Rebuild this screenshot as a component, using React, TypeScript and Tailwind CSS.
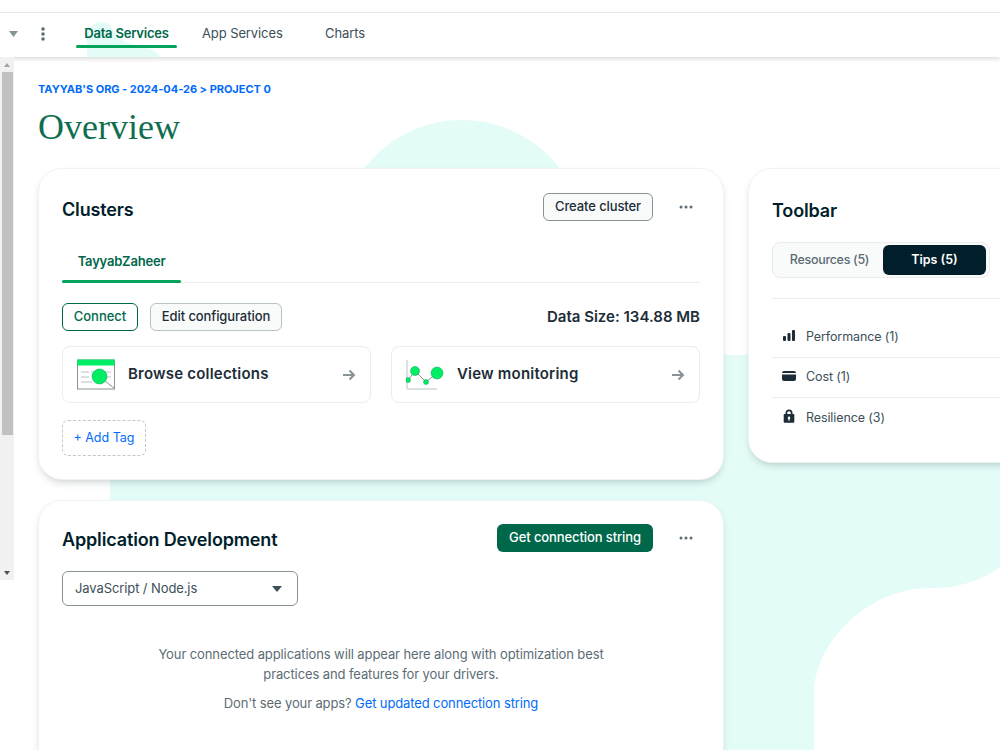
import React from "react";

function Dots() {
  return (
    <svg width="16" height="16" viewBox="0 0 16 16" fill="#5c6c75">
      <circle cx="3" cy="8" r="1.5" />
      <circle cx="8" cy="8" r="1.5" />
      <circle cx="13" cy="8" r="1.5" />
    </svg>
  );
}

function Arrow() {
  return (
    <svg width="14" height="14" viewBox="0 0 14 14" fill="none" stroke="#889397" strokeWidth="2">
      <path d="M1 7h11M7.500 2.500 12 7l-4.500 4.500" />
    </svg>
  );
}

function BrowseIcon() {
  return (
    <svg width="40" height="32" viewBox="0 0 40 32" fill="none">
      <rect x="0.500" y="1" width="37" height="29" fill="#fff" stroke="#889397" />
      <rect x="0.500" y="0.500" width="37" height="6" fill="#00ed64" />
      <path d="M4 13h8M14 13h20M4 18h8M26 18h8M4 23h11" stroke="#b8c4c2" />
      <circle cx="22.500" cy="17.500" r="7.500" fill="#00ed64" stroke="#00a35c" strokeWidth="0.500" />
      <path d="M28 22l10 8" stroke="#889397" />
    </svg>
  );
}

function MonitorIcon() {
  return (
    <svg width="40" height="34" viewBox="0 0 40 34" fill="none">
      <path d="M1 2V31H31" stroke="#b8c4c2" />
      <path d="M2 22 9 13l11 11L31 15" stroke="#889397" />
      <circle cx="2" cy="22" r="2.500" fill="#00ed64" stroke="#00a35c" strokeWidth="0.500" />
      <circle cx="9" cy="13" r="4.500" fill="#00ed64" stroke="#00a35c" strokeWidth="0.500" />
      <circle cx="20" cy="24" r="2.500" fill="#00ed64" stroke="#00a35c" strokeWidth="0.500" />
      <circle cx="31" cy="15" r="6" fill="#00ed64" stroke="#00a35c" strokeWidth="0.500" />
    </svg>
  );
}

function BarsIcon() {
  return (
    <svg width="14" height="14" viewBox="0 0 14 14" fill="#1c2d38">
      <rect x="1" y="7" width="3" height="5" rx="1" />
      <rect x="5.500" y="4" width="3" height="8" rx="1" />
      <rect x="10" y="1" width="3" height="11" rx="1" />
    </svg>
  );
}

function CardIcon() {
  return (
    <svg width="14" height="14" viewBox="0 0 14 14" fill="#1c2d38">
      <path d="M0 4a2 2 0 0 1 2-2h10a2 2 0 0 1 2 2H0ZM0 5.500h14V10a2 2 0 0 1-2 2H2a2 2 0 0 1-2-2V5.500Z" />
    </svg>
  );
}

function LockIcon() {
  return (
    <svg width="14" height="14" viewBox="0 0 14 14" fill="#1c2d38">
      <path
        fillRule="evenodd"
        d="M3.500 5V4a3.500 3.500 0 0 1 7 0v1h1a.8.8 0 0 1 .8.8V13a.8.8 0 0 1-.8.8h-9a.8.8 0 0 1-.8-.8V5.800A.8.8 0 0 1 2.500 5h1Zm1.700 0h3.600V4a1.800 1.800 0 0 0-3.600 0v1ZM7 7.500a1.300 1.300 0 0 0-.7 2.400v1.600h1.400V9.900A1.300 1.300 0 0 0 7 7.500Z"
      />
    </svg>
  );
}

function ActionCard({ icon, label }: { icon: React.ReactNode; label: string }) {
  return (
    <div className="flex h-[57px] flex-1 items-center rounded-[8px] border border-[#e8eded] bg-white pl-[14px] pr-[14px]">
      <span className="flex w-[51px] shrink-0 items-center">{icon}</span>
      <span className="text-[15px] font-semibold tracking-[0.2px] text-[#1c2d38]">{label}</span>
      <span className="ml-auto flex">
        <Arrow />
      </span>
    </div>
  );
}

function TipRow({ icon, label, last }: { icon: React.ReactNode; label: string; last?: boolean }) {
  return (
    <div className={`flex h-[40px] items-center pl-[10px] ${last ? "" : "border-b border-[#e8eded]"}`}>
      <span className="mr-[10px] flex w-[14px] -translate-y-[2px]">{icon}</span>
      <span className="text-[12.500px] tracking-[-0.1px] text-[#3d4f58]">{label}</span>
    </div>
  );
}

export default function App() {
  return (
    <div
      className="relative h-[750px] w-[1000px] overflow-hidden bg-white"
      style={{ fontFamily: '"Inter", "Noto Sans", sans-serif' }}
    >
      {/* decorative page background */}
      <svg className="absolute left-0 top-0" width="1000" height="750" viewBox="0 0 1000 750">
        <path d="M87 57V38C87 28 94 22 102 22C112 22 113 33 122 40C135 48 155 45 160 57Z" fill="#e3fcf7" />
        <circle cx="462" cy="243" r="123" fill="#e3fcf7" />
        <path d="M110 355H1000V567C980 581 960 588 930 588C870 588 814 640 814 695V750H110Z" fill="#e3fcf7" />
      </svg>

      <div className="relative flex h-full flex-col">
        <div className="h-[13px] shrink-0 border-b border-[#e8eded] bg-white" />
        <header className="flex h-[44px] shrink-0 items-center pb-[2px] shadow-[0_2px_4px_rgba(0,30,43,0.15)]">
          <svg className="ml-[9px]" width="9" height="6" viewBox="0 0 9 6" fill="#889397">
            <path d="M0 0h9L4.500 6Z" />
          </svg>
          <svg className="ml-[21px]" width="8" height="14" viewBox="0 0 8 14" fill="#5c6c75">
            <circle cx="4" cy="2" r="1.800" />
            <circle cx="4" cy="7" r="1.800" />
            <circle cx="4" cy="12" r="1.800" />
          </svg>
          <div className="relative ml-[29px] flex h-full w-[101px] items-center justify-center whitespace-nowrap text-[13px] font-semibold tracking-[-0.2px] text-[#00684a]">
            Data Services
            <span className="absolute bottom-[7px] left-0 h-[3px] w-full rounded-full bg-[#00a35c]" />
          </div>
          <span className="ml-[25px] w-[79px] whitespace-nowrap text-[13px] tracking-[-0.1px] text-[#3d4f58]">App Services</span>
          <span className="ml-[44px] text-[13px] tracking-[-0.1px] text-[#3d4f58]">Charts</span>
        </header>

        <div className="flex min-h-0 flex-1">
          <div className="flex h-[523px] w-[14px] shrink-0 flex-col bg-[#f1f1f1]">
            <div className="flex h-[15px] items-center justify-center">
              <span className="h-0 w-0 border-x-[3.500px] border-b-[4px] border-x-transparent border-b-[#a3a3a3]" />
            </div>
            <div className="ml-[2px] h-[363px] w-[11px] bg-[#c1c1c1]" />
            <div className="mt-auto flex h-[14px] items-center justify-center">
              <span className="h-0 w-0 border-x-[3.500px] border-t-[4px] border-x-transparent border-t-[#505050]" />
            </div>
          </div>

          <main className="flex min-w-0 flex-1 flex-col pl-[24px] pt-[24px]">
            <div className="text-[11px] font-bold uppercase leading-[16px] tracking-[-0.03px] text-[#016bf8]">
              Tayyab's Org - 2024-04-26 &gt; Project 0
            </div>
            <h1
              className="mt-[6px] text-[36px] leading-[48px] text-[#0f6e50]"
              style={{ fontFamily: '"Liberation Serif", serif' }}
            >
              Overview
            </h1>
            <div className="mt-[17px] flex gap-[24px]">
              <div className="flex w-[686px] shrink-0 flex-col gap-[20px]">
                <section className="h-[312px] rounded-[24px] border border-[#f0f3f3] bg-white px-[23px] shadow-[0_4px_10px_-4px_rgba(0,30,43,0.3)]">
                  <div className="flex h-[76px] items-center">
                    <h2 className="mt-[4px] text-[18px] font-semibold tracking-[-0.15px] text-[#001e2b]">Clusters</h2>
                    <button className="ml-auto h-[28px] w-[110px] rounded-[6px] border border-[#889397] bg-[#f9fbfa] text-[13px] font-medium tracking-[-0.1px] text-[#1c2d38]">
                      Create cluster
                    </button>
                    <span className="ml-[25px] mr-[6px] flex">
                      <Dots />
                    </span>
                  </div>
                  <div className="flex h-[38px] border-b border-[#e8eded]">
                    <div className="relative flex h-full w-[119px] items-center justify-center pb-[3px] text-[13px] font-semibold tracking-[-0.2px] text-[#00684a]">
                      TayyabZaheer
                      <span className="absolute bottom-[-1px] left-0 h-[3px] w-full rounded-full bg-[#00a35c]" />
                    </div>
                  </div>
                  <div className="mt-[20px] flex h-[28px] items-center gap-[12px]">
                    <button className="h-[28px] w-[76px] rounded-[6px] border border-[#00684a] bg-white text-[13px] font-medium text-[#00684a]">
                      Connect
                    </button>
                    <button className="h-[28px] w-[132px] rounded-[6px] border border-[#b8c4c2] bg-[#f9fbfa] text-[13px] font-medium tracking-[-0.1px] text-[#1c2d38]">
                      Edit configuration
                    </button>
                    <span className="ml-auto text-[15px] font-semibold text-[#1c2d38]">Data Size: 134.88 MB</span>
                  </div>
                  <div className="mt-[15px] flex gap-[20px]">
                    <ActionCard icon={<BrowseIcon />} label="Browse collections" />
                    <ActionCard icon={<MonitorIcon />} label="View monitoring" />
                  </div>
                  <button className="mt-[17px] h-[36px] w-[84px] rounded-[6px] border border-dashed border-[#c1c7c6] text-[12.500px] text-[#016bf8]">
                    + Add Tag
                  </button>
                </section>

                <section className="h-[300px] rounded-[24px] border border-[#f0f3f3] bg-white px-[23px] shadow-[0_4px_10px_-4px_rgba(0,30,43,0.3)]">
                  <div className="flex h-[74px] items-center">
                    <h2 className="mt-[2px] text-[18px] font-semibold tracking-[-0.15px] text-[#001e2b]">Application Development</h2>
                    <button className="ml-auto h-[28px] w-[156px] rounded-[6px] bg-[#00684a] text-[13px] font-medium tracking-[-0.1px] text-white">
                      Get connection string
                    </button>
                    <span className="ml-[25px] mr-[6px] flex">
                      <Dots />
                    </span>
                  </div>
                  <div className="-mt-[4px] flex h-[35px] w-[236px] items-center justify-between rounded-[6px] border border-[#889397] bg-white pl-[12px] pr-[15px] text-[13px] tracking-[-0.1px] text-[#3d4f58]">
                    JavaScript / Node.js
                    <svg width="10" height="6" viewBox="0 0 10 6" fill="#3d4f58">
                      <path d="M0 0h10L5 6Z" />
                    </svg>
                  </div>
                  <p className="mx-auto mt-[38px] w-[460px] text-center text-[13px] leading-[20px] tracking-[-0.1px] text-[#5c6c75]">
                    Your connected applications will appear here along with optimization best practices and features for your drivers.
                  </p>
                  <p className="mt-[9px] text-center text-[13px] leading-[20px] tracking-[-0.12px] text-[#5c6c75]">
                    Don't see your apps? <span className="text-[#016bf8]">Get updated connection string</span>
                  </p>
                </section>
              </div>

              <aside className="h-[295px] w-[300px] shrink-0 rounded-[24px] border border-[#f0f3f3] bg-white pl-[23px] shadow-[0_4px_10px_-4px_rgba(0,30,43,0.3)]">
                <h2 className="mt-[30px] text-[18px] font-semibold leading-[24px] tracking-[-0.15px] text-[#001e2b]">Toolbar</h2>
                <div className="mt-[19px] flex h-[36px] w-[218px] items-center rounded-[8px] border border-[#e8eded] bg-[#f9fbfa] p-[3px]">
                  <span className="flex-1 text-center text-[12.500px] font-medium tracking-[-0.3px] text-[#5c6c75]">Resources (5)</span>
                  <span className="flex h-[30px] w-[103px] items-center justify-center rounded-[6px] bg-[#001e2b] text-[12.500px] font-semibold text-white">
                    Tips (5)
                  </span>
                </div>
                <div className="mt-[20px] border-t border-[#e8eded] pt-[19px]">
                  <TipRow icon={<BarsIcon />} label="Performance (1)" />
                  <TipRow icon={<CardIcon />} label="Cost (1)" />
                  <TipRow icon={<LockIcon />} label="Resilience (3)" last />
                </div>
              </aside>
            </div>
          </main>
        </div>
      </div>
    </div>
  );
}
